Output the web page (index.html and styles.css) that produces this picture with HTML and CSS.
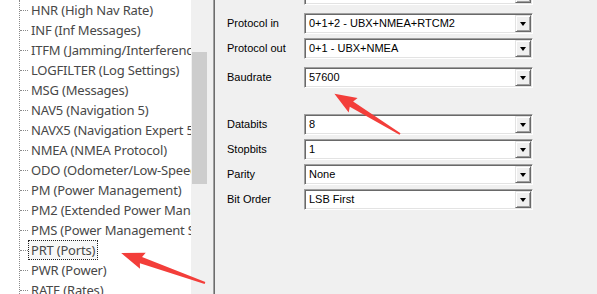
FILE: index.html
```html
<!DOCTYPE html>
<html>
<head>
<meta charset="utf-8">
<link rel="stylesheet" href="styles.css">
</head>
<body>
<div class="window">
  <div class="tree">
    <ul class="tree-list">
      <li class="node"><span class="label">HNR (High Nav Rate)</span></li>
      <li class="node"><span class="label">INF (Inf Messages)</span></li>
      <li class="node"><span class="label">ITFM (Jamming/Interference Monitor)</span></li>
      <li class="node"><span class="label">LOGFILTER (Log Settings)</span></li>
      <li class="node"><span class="label">MSG (Messages)</span></li>
      <li class="node"><span class="label">NAV5 (Navigation 5)</span></li>
      <li class="node"><span class="label">NAVX5 (Navigation Expert 5)</span></li>
      <li class="node"><span class="label">NMEA (NMEA Protocol)</span></li>
      <li class="node"><span class="label">ODO (Odometer/Low-Speed COG Filter)</span></li>
      <li class="node"><span class="label">PM (Power Management)</span></li>
      <li class="node"><span class="label">PM2 (Extended Power Management)</span></li>
      <li class="node"><span class="label">PMS (Power Management Setup)</span></li>
      <li class="node"><span class="label selected">PRT (Ports)</span></li>
      <li class="node"><span class="label">PWR (Power)</span></li>
      <li class="node"><span class="label">RATE (Rates)</span></li>
    </ul>
  </div>
  <div class="scrollbar"><div class="thumb"></div></div>
  <div class="divider"></div>
  <div class="panel">
    <div class="row">
      <span class="field-label">Target</span>
      <div class="combo"><span class="combo-value">1 - UART1</span><span class="combo-btn"></span></div>
    </div>
    <div class="row spaced-sm">
      <span class="field-label">Protocol in</span>
      <div class="combo"><span class="combo-value">0+1+2 - UBX+NMEA+RTCM2</span><span class="combo-btn"></span></div>
    </div>
    <div class="row">
      <span class="field-label">Protocol out</span>
      <div class="combo"><span class="combo-value">0+1 - UBX+NMEA</span><span class="combo-btn"></span></div>
    </div>
    <div class="row spaced-sm">
      <span class="field-label">Baudrate</span>
      <div class="combo"><span class="combo-value">57600</span><span class="combo-btn"></span></div>
    </div>
    <div class="row spaced-lg">
      <span class="field-label">Databits</span>
      <div class="combo"><span class="combo-value">8</span><span class="combo-btn"></span></div>
    </div>
    <div class="row">
      <span class="field-label">Stopbits</span>
      <div class="combo"><span class="combo-value">1</span><span class="combo-btn"></span></div>
    </div>
    <div class="row">
      <span class="field-label">Parity</span>
      <div class="combo"><span class="combo-value">None</span><span class="combo-btn"></span></div>
    </div>
    <div class="row">
      <span class="field-label">Bit Order</span>
      <div class="combo"><span class="combo-value">LSB First</span><span class="combo-btn"></span></div>
    </div>
  </div>
  <svg class="annot" width="597" height="294" viewBox="0 0 597 294">
    <polygon class="arrow" transform="translate(400,134) rotate(-148.4)" points="0,-1 57,-3.2 55,-8.5 77,0 55,8.5 57,3.2 0,1"/>
    <polygon class="arrow" transform="translate(205,283) rotate(-160.35)" points="0,-1 68,-3.2 66,-8.5 89,0 66,8.5 68,3.2 0,1"/>
  </svg>
</div>
</body>
</html>
```
FILE: styles.css
```css
html, body {
  margin: 0;
  height: 100%;
  overflow: hidden;
  background: #f0f0f0;
}

.window {
  position: relative;
  display: flex;
  width: 597px;
  height: 294px;
  overflow: hidden;
}

.tree {
  flex: none;
  width: 191px;
  box-sizing: border-box;
  padding-left: 19px;
  background: #fff;
  overflow: hidden;
}

.tree-list {
  list-style: none;
  margin: 0;
  padding: 0;
  height: 100%;
  border-left: 1px dotted #8a8a8a;
}

.node {
  display: flex;
  align-items: center;
  height: 20px;
  white-space: nowrap;
}

.node::before {
  content: "";
  flex: none;
  width: 8px;
  border-top: 1px dotted #8a8a8a;
}

.label {
  font-family: "Noto Sans", sans-serif;
  font-size: 13px;
  letter-spacing: -0.2px;
  line-height: 18px;
  color: #484848;
  border: 1px solid transparent;
  padding: 0 2px;
}

.label.selected {
  border: 1px dotted #222;
  background: #f7f7f7;
}

.scrollbar {
  flex: none;
  width: 17px;
  box-sizing: border-box;
  padding-top: 52px;
  background: #f0f0f0;
}

.thumb {
  margin-left: 1px;
  width: 15px;
  height: 132px;
  background: #cdcdcd;
}

.divider {
  flex: none;
  width: 2px;
  margin-left: 5px;
  background: linear-gradient(to right, #a0a0a0 50%, #6d6d6d 50%);
}

.panel {
  flex: 1;
  display: flex;
  flex-direction: column;
  gap: 4px;
  margin-top: -16px;
  padding-left: 12px;
}

.row {
  display: flex;
  align-items: center;
  height: 21px;
  flex: none;
}

.row.spaced-sm { margin-top: 4px; }
.row.spaced-lg { margin-top: 22px; }

.field-label {
  flex: none;
  width: 77px;
  font-family: "Liberation Sans", Arial, sans-serif;
  font-size: 11px;
  line-height: 13px;
  color: #000;
}

.combo {
  flex: none;
  display: flex;
  width: 229px;
  height: 21px;
  box-sizing: border-box;
  padding: 1px;
  background: #fff;
  border: 1px solid;
  border-color: #a0a0a0 #fff #fff #a0a0a0;
  box-shadow: inset 1px 1px 0 #696969, inset -1px -1px 0 #e3e3e3;
}

.combo-value {
  flex: 1;
  padding-left: 3px;
  font-family: "Liberation Sans", Arial, sans-serif;
  font-size: 11px;
  line-height: 17px;
  color: #000;
  white-space: nowrap;
}

.combo-btn {
  flex: none;
  width: 16px;
  box-sizing: border-box;
  display: flex;
  align-items: center;
  justify-content: center;
  background: #f0f0f0;
  border: 1px solid;
  border-color: #e3e3e3 #696969 #696969 #e3e3e3;
  box-shadow: inset 1px 1px 0 #fff, inset -1px -1px 0 #a0a0a0;
}

.combo-btn::after {
  content: "";
  width: 0;
  height: 0;
  border-left: 3.5px solid transparent;
  border-right: 3.5px solid transparent;
  border-top: 4px solid #000;
}

.annot {
  position: absolute;
  left: 0;
  top: 0;
  pointer-events: none;
}

.arrow {
  fill: #f33e3a;
}
```
